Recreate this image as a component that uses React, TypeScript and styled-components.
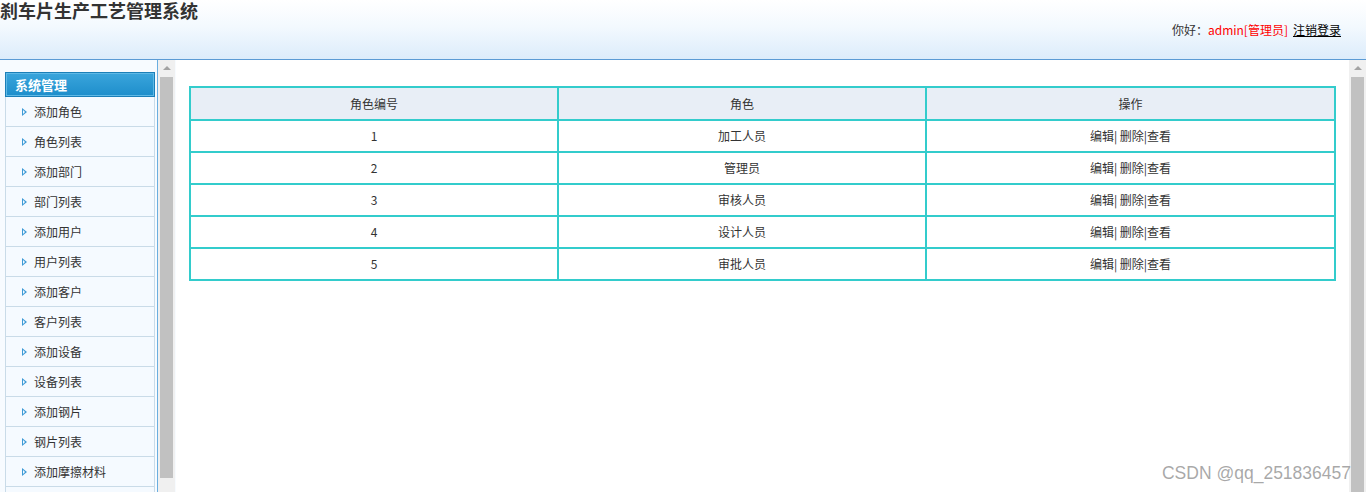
import styled, {createGlobalStyle} from 'styled-components';

const GlobalStyle = createGlobalStyle`
  html, body {
    margin: 0;
    padding: 0;
    background: #fff;
    font-family: "Microsoft YaHei", "Noto Sans CJK SC", "Liberation Sans", sans-serif;
    font-size: 12px;
    color: #333;
    overflow: hidden;
  }
`;

const Page = styled.div`
  position: relative;
  width: 1366px;
  height: 492px;
  display: flex;
  flex-direction: column;
  overflow: hidden;
`;

const Header = styled.div`
  height: 59px;
  border-bottom: 1px solid #5b9bd5;
  background: linear-gradient(to bottom, #ffffff 0%, #f3f9fe 45%, #dcecfb 100%);
  display: flex;
  justify-content: space-between;
  flex-shrink: 0;
`;

const Title = styled.h1`
  margin: 0;
  font-size: 18px;
  line-height: 21px;
  font-weight: bold;
  color: #333;
`;

const UserBar = styled.div`
  padding: 21px 25px 0 0;
  font-size: 12px;
  line-height: 18px;
  color: #333;
`;

const Red = styled.span`
  color: #ff0000;
`;

const Logout = styled.a`
  color: #000;
  text-decoration: underline;
  margin-left: 5px;
`;

const Body = styled.div`
  flex: 1;
  display: flex;
  min-height: 0;
`;

const LeftFrame = styled.div`
  width: 176px;
  display: flex;
  flex-shrink: 0;
  background: #f7fbff;
`;

const MenuPane = styled.div`
  width: 158px;
  border-right: 1px solid #6aaee0;
  padding: 12px 0 0 5px;
  box-sizing: border-box;
  overflow: hidden;
`;

const Menu = styled.div`
  width: 150px;
  border-left: 1px solid #c9dbe8;
  border-right: 1px solid #c9dbe8;
  box-sizing: border-box;
`;

const MenuHead = styled.div`
  height: 23px;
  line-height: 23px;
  padding-left: 9px;
  color: #fff;
  font-weight: bold;
  font-size: 13px;
  background: linear-gradient(to bottom, #3aa5dc 0%, #1e8ecb 100%);
  border: 1px solid #1b7fb8;
  margin: 0 -1px;
  box-shadow: inset 0 0 0 1px #5fb9e6;
`;

const MenuItem = styled.div`
  height: 29px;
  line-height: 29px;
  border-bottom: 1px solid #c9dbe8;
  background: #f5faff;
  padding-left: 16px;
  display: flex;
  align-items: center;
  gap: 7px;
  color: #333;
`;

const Arrow = styled.span`
  width: 0;
  height: 0;
  border-top: 4px solid transparent;
  border-bottom: 4px solid transparent;
  border-left: 5px solid #3d9ad6;
  position: relative;
  &::after {
    content: '';
    position: absolute;
    left: -4px;
    top: -2px;
    border-top: 2px solid transparent;
    border-bottom: 2px solid transparent;
    border-left: 2px solid #f5faff;
  }
`;

const Scrollbar = styled.div`
  width: 17px;
  background: #f0f0f0;
  position: relative;
  flex-shrink: 0;
  box-sizing: border-box;
  padding: 17px 2px 0 2px;
  display: flex;
  flex-direction: column;
`;

const ScrollUp = styled.span`
  position: absolute;
  top: 6px;
  left: 5px;
  border-left: 4px solid transparent;
  border-right: 4px solid transparent;
  border-bottom: 4px solid #a3a3a3;
`;

const Thumb = styled.div<{$bottom: number}>`
  background: #c1c1c1;
  flex: 1;
  margin-bottom: ${p => p.$bottom}px;
`;

const Main = styled.div`
  flex: 1;
  display: flex;
  min-width: 0;
`;

const Content = styled.div`
  flex: 1;
  padding: 26px 13px 0 13px;
`;

const Table = styled.table`
  width: 1147px;
  border-collapse: collapse;
  table-layout: fixed;
`;

const Th = styled.th<{$w?: number}>`
  border: 2px solid #33cccc;
  background: #e8eef6;
  height: 31px;
  padding: 0;
  font-weight: normal;
  font-size: 12px;
  color: #333;
  text-align: center;
  ${p => (p.$w ? `width: ${p.$w}px;` : '')}
`;

const Td = styled.td`
  border: 2px solid #33cccc;
  height: 28px;
  padding: 0 0 2px 0;
  text-align: center;
  font-size: 12px;
  color: #333;
`;

const Watermark = styled.div`
  position: absolute;
  right: 15px;
  bottom: 8px;
  font-family: "Liberation Sans", Arial, sans-serif;
  font-size: 17.5px;
  color: rgba(140, 140, 140, 0.75);
`;

const menuItems = [
  '添加角色',
  '角色列表',
  '添加部门',
  '部门列表',
  '添加用户',
  '用户列表',
  '添加客户',
  '客户列表',
  '添加设备',
  '设备列表',
  '添加钢片',
  '钢片列表',
  '添加摩擦材料',
  '摩擦材料列表',
];

const roles = [
  {id: 1, name: '加工人员'},
  {id: 2, name: '管理员'},
  {id: 3, name: '审核人员'},
  {id: 4, name: '设计人员'},
  {id: 5, name: '审批人员'},
];

const App = () => {
  return (
    <Page>
      <GlobalStyle />
      <Header>
        <Title>刹车片生产工艺管理系统</Title>
        <UserBar>
          你好：<Red>admin[管理员]</Red>
          <Logout href="#">注销登录</Logout>
        </UserBar>
      </Header>
      <Body>
        <LeftFrame>
          <MenuPane>
            <Menu>
              <MenuHead>系统管理</MenuHead>
              {menuItems.map((item, i) => (
                <MenuItem key={i}>
                  <Arrow />
                  {item}
                </MenuItem>
              ))}
            </Menu>
          </MenuPane>
          <Scrollbar>
            <ScrollUp />
            <Thumb $bottom={14} />
          </Scrollbar>
        </LeftFrame>
        <Main>
          <Content>
            <Table>
              <thead>
                <tr>
                  <Th $w={366}>角色编号</Th>
                  <Th $w={366}>角色</Th>
                  <Th>操作</Th>
                </tr>
              </thead>
              <tbody>
                {roles.map(role => (
                  <tr key={role.id}>
                    <Td>{role.id}</Td>
                    <Td>{role.name}</Td>
                    <Td>编辑| 删除|查看</Td>
                  </tr>
                ))}
              </tbody>
            </Table>
          </Content>
          <Scrollbar>
            <ScrollUp />
            <Thumb $bottom={0} />
          </Scrollbar>
        </Main>
      </Body>
      <Watermark>CSDN @qq_251836457</Watermark>
    </Page>
  );
};

export default App;
